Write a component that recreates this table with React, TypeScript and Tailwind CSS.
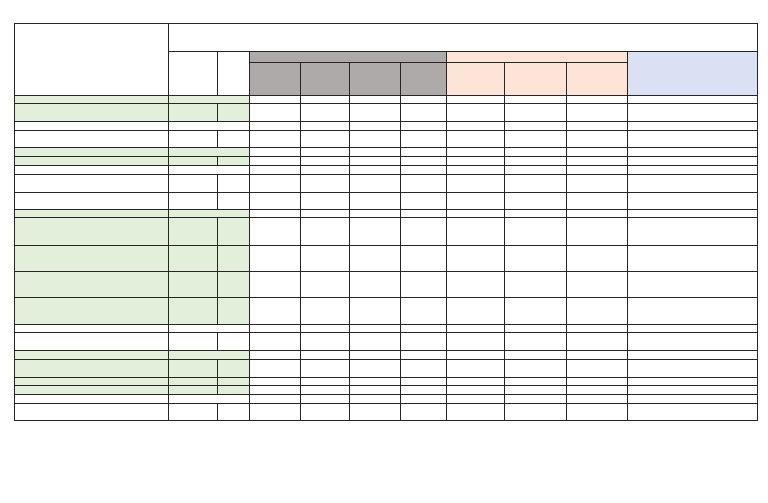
import React from 'react';

// body rows: green = left block tinted, split = col 2/3 divided
const rows: { green: boolean; split: boolean }[] = [
  { green: true, split: false },
  { green: true, split: true },
  { green: false, split: false },
  { green: false, split: true },
  { green: true, split: false },
  { green: true, split: true },
  { green: false, split: false },
  { green: false, split: true },
  { green: false, split: true },
  { green: true, split: false },
  { green: true, split: true },
  { green: true, split: true },
  { green: true, split: true },
  { green: true, split: true },
  { green: false, split: false },
  { green: false, split: true },
  { green: true, split: false },
  { green: true, split: true },
  { green: true, split: true },
  { green: true, split: true },
  { green: false, split: false },
  { green: false, split: true },
];

const Sheet = () => {
  return (
    <div className="grid w-fit gap-px bg-[#262626] p-px grid-cols-[153px_48px_31px_50px_48px_50px_45px_57px_61px_60px_129px] grid-rows-[27px_10px_32px_7px_17px_8px_16px_8px_8px_8px_17px_16px_7px_27px_25px_25px_26px_7px_17px_8px_17px_7px_8px_8px_16px]">
      {/* header */}
      <div className="row-span-3 bg-white" />
      <div className="col-span-10 bg-white" />
      <div className="row-span-2 bg-white" />
      <div className="row-span-2 bg-white" />
      <div className="col-span-4 bg-[#aeaaaa]" />
      <div className="col-span-3 bg-[#fce4d6]" />
      <div className="row-span-2 bg-[#d9e1f2]" />
      {[0, 1, 2, 3].map((i) => (
        <div key={'g' + i} className="bg-[#aeaaaa]" />
      ))}
      {[0, 1, 2].map((i) => (
        <div key={'p' + i} className="bg-[#fce4d6]" />
      ))}

      {/* body */}
      {rows.map((row, r) => {
        const tint = row.green ? 'bg-[#e2efda]' : 'bg-white';
        return (
          <React.Fragment key={r}>
            <div className={tint} />
            {row.split ? (
              <>
                <div className={tint} />
                <div className={tint} />
              </>
            ) : (
              <div className={`col-span-2 ${tint}`} />
            )}
            {[0, 1, 2, 3, 4, 5, 6, 7].map((c) => (
              <div key={c} className="bg-white" />
            ))}
          </React.Fragment>
        );
      })}
    </div>
  );
};

export default function App() {
  return (
    <div className="h-[503px] w-[768px] overflow-hidden bg-white pl-[14px] pt-[23px] font-['Liberation_Sans',sans-serif]">
      <Sheet />
    </div>
  );
}
